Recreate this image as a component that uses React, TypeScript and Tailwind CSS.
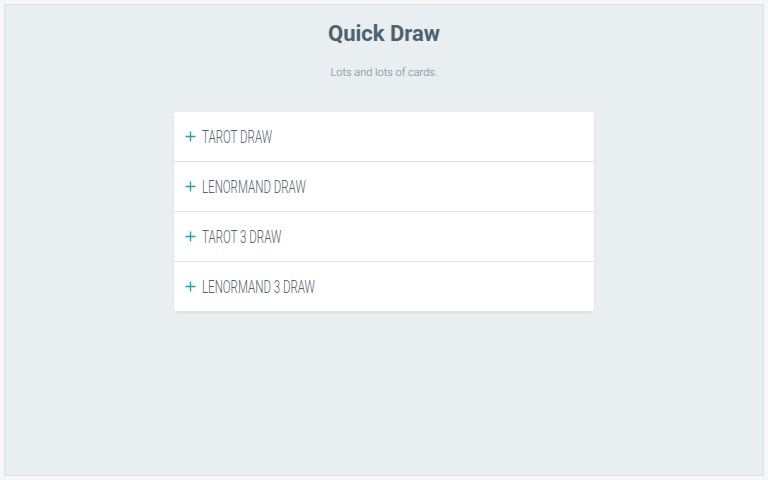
const draws = ["Tarot Draw", "Lenormand Draw", "Tarot 3 Draw", "Lenormand 3 Draw"];

function PlusIcon() {
  return (
    <svg width="11" height="11" viewBox="0 0 11 11" className="shrink-0">
      <path d="M5.5 0.5v10M0.5 5.5h10" stroke="#23a0b3" strokeWidth="1.4" fill="none" />
    </svg>
  );
}

export default function App() {
  return (
    <div className="h-[480px] w-[768px] bg-[#f7f7f7] p-[4px] font-['Roboto',sans-serif]">
      <div className="flex h-full flex-col items-center border border-[#dcdfe1] bg-[#e9eef1]">
        <h1 className="mt-[15px] text-[22px] font-bold leading-[28px] text-[#4d626e]">Quick Draw</h1>
        <p className="mt-[18px] text-[11px] font-light leading-[14px] text-[#76828a]">Lots and lots of cards.</p>
        <div className="mt-[32px] w-[420px] overflow-hidden rounded-[3px] bg-white shadow-[0_1px_2px_rgba(0,0,0,0.08)]">
          {draws.map((label) => (
            <div
              key={label}
              className="flex h-[50px] items-center border-b border-[#dfe3e6] pl-[11px]"
            >
              <PlusIcon />
              <span className="ml-[6px] inline-block origin-left scale-x-[0.64] whitespace-nowrap text-[18px] font-light uppercase text-[#53636d]">
                {label}
              </span>
            </div>
          ))}
        </div>
      </div>
    </div>
  );
}
